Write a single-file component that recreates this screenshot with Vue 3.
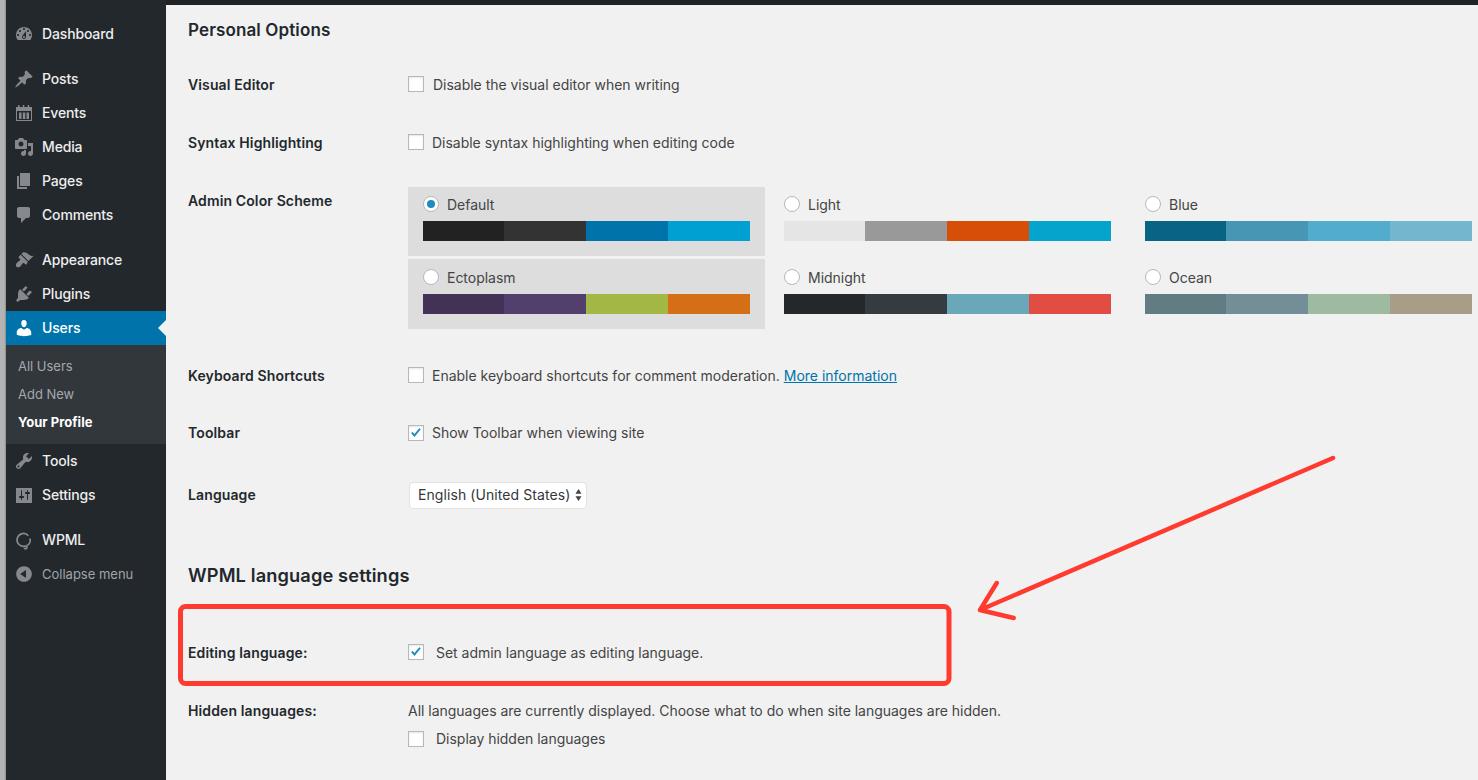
<script setup>
const icons = {
  dashboard: 'M3.76 16h12.48c1.1-1.37 1.76-3.11 1.76-5 0-4.42-3.58-8-8-8s-8 3.58-8 8c0 1.89.66 3.63 1.76 5zM10 4c.55 0 1 .45 1 1s-.45 1-1 1-1-.45-1-1 .45-1 1-1zM6 6c.55 0 1 .45 1 1s-.45 1-1 1-1-.45-1-1 .45-1 1-1zm8 0c.55 0 1 .45 1 1s-.45 1-1 1-1-.45-1-1 .45-1 1-1zm-5.37 5.55L12 7v6c0 1.1-.9 2-2 2s-2-.9-2-2c0-.57.24-1.08.63-1.45zM4 10c.55 0 1 .45 1 1s-.45 1-1 1-1-.45-1-1 .45-1 1-1zm12 0c.55 0 1 .45 1 1s-.45 1-1 1-1-.45-1-1 .45-1 1-1zm-5 3c0-.55-.45-1-1-1s-1 .45-1 1 .45 1 1 1 1-.45 1-1z',
  post: 'M10.44 3.02l1.82-1.82 6.36 6.35-1.83 1.82c-1.05-.68-2.48-.57-3.41.36l-.75.75c-.92.93-1.04 2.35-.35 3.41l-1.83 1.82-2.41-2.41-2.8 2.79c-.42.42-3.38 2.71-3.8 2.29s1.86-3.39 2.28-3.81l2.79-2.79L4.1 9.36l1.83-1.82c1.05.69 2.48.57 3.4-.36l.75-.75c.93-.92 1.05-2.35.36-3.41z',
  events: 'M2 4h2V2h1.5v2h3.3V2h1.5v2h3.4V2h1.5v2H18v14H2V4zm1 4v9h14V8H3zm2 1.5h2.5V16H5V9.500zm3.800 0h2.500V16H8.800V9.500zm3.700 0H15V16h-2.500V9.500z',
  media: 'M13 11V4c0-.55-.45-1-1-1h-1.67L9 1H5L3.67 3H2c-.55 0-1 .45-1 1v7c0 .55.45 1 1 1h10c.55 0 1-.45 1-1zM7 4.500c1.380 0 2.500 1.120 2.500 2.500S8.380 9.500 7 9.500 4.500 8.380 4.500 7 5.620 4.500 7 4.500zM14 6h5v10.500c0 1.380-1.120 2.500-2.500 2.500S14 17.880 14 16.500s1.120-2.500 2.500-2.500c.17 0 .34.02.5.05V9h-3V6zm-4 8.050V13h2v3.500c0 1.380-1.120 2.500-2.500 2.500S7 17.880 7 16.500 8.120 14 9.500 14c.17 0 .34.02.5.05z',
  page: 'M6 15V2h10v13H6zm-1 1h8v2H3V5h2v11z',
  comments: 'M5 2h9c1.100 0 2 .9 2 2v7c0 1.100-.9 2-2 2h-2l-5 5v-5H5c-1.100 0-2-.9-2-2V4c0-1.100.9-2 2-2z',
  appearance: 'M14.480 11.060L7.410 3.990l1.500-1.500c.5-.56 2.300-.47 3.510.32 1.210.8 1.430 1.280 2.910 2.100 1.180.64 2.450 1.260 4.450.85zM13.770 11.770L6.700 4.700 4.930 6.470c-.39.39-.39 1.020 0 1.410l1.060 1.060c.39.39.39 1.030 0 1.420-.6.6-1.430 1.110-2.210 1.690-.35.26-.7.53-1.010.84-1.180 1.180-1.140 2.900-.3 3.800.9.9 2.620.88 3.800-.3.31-.31.58-.66.84-1.010.58-.78 1.090-1.610 1.690-2.210.39-.39 1.030-.39 1.420 0l1.060 1.060c.39.39 1.020.39 1.410 0z',
  plugins: 'M13.110 4.360L9.870 7.600 8 5.730l3.240-3.240c.35-.34 1.050-.2 1.560.32.52.51.66 1.210.31 1.550zm-8 1.770l.91-1.120 9.010 9.010-1.190.84c-.71.71-2.630 1.160-3.820 1.160H6.140L4.900 17.260c-.59.59-1.540.59-2.120 0-.59-.58-.59-1.530 0-2.120l1.240-1.240v-3.880c0-1.130.4-3.190 1.090-3.890zm7.260 3.970l3.240-3.240c.34-.35 1.040-.21 1.550.31.52.51.66 1.210.31 1.550l-3.240 3.250z',
  users: 'M10 9.250c-2.270 0-2.730-3.440-2.730-3.440C7 4.020 7.820 2 9.970 2c2.160 0 2.980 2.020 2.710 3.810 0 0-.41 3.440-2.680 3.440zm0 2.570L12.720 10c2.390 0 4.520 2.330 4.520 4.530v2.490s-3.650 1.130-7.240 1.130c-3.650 0-7.240-1.130-7.240-1.130v-2.490c0-2.250 1.940-4.480 4.470-4.480z',
  tools: 'M16.680 9.770c-1.340 1.340-3.300 1.670-4.950.99l-5.410 6.520c-.99.99-2.590.99-3.580 0s-.99-2.590 0-3.570l6.520-5.420c-.68-1.650-.35-3.610.99-4.950 1.280-1.280 3.120-1.620 4.720-1.060l-2.890 2.890 2.820 2.820 2.860-2.870c.53 1.580.18 3.390-1.080 4.650zM3.810 16.210c.4.39 1.040.39 1.430 0 .4-.4.4-1.040 0-1.430-.39-.4-1.030-.4-1.430 0-.39.39-.39 1.030 0 1.430z',
  settings: 'M18 18V3H2v15h16zM8 11h1c.55 0 1 .45 1 1s-.45 1-1 1H8v1.500c0 .28-.22.5-.5.5s-.5-.22-.5-.5V13H6c-.55 0-1-.45-1-1s.45-1 1-1h1V5.500c0-.28.22-.5.5-.5s.5.22.5.5V11zm5-2h-1c-.55 0-1-.45-1-1s.45-1 1-1h1V5.500c0-.28.22-.5.5-.5s.5.22.5.5V7h1c.55 0 1 .45 1 1s-.45 1-1 1h-1v5.500c0 .28-.22.5-.5.5s-.5-.22-.5-.5V9z',
  wpml: 'M14.300 5.700A6.400 6.400 0 1 0 10.500 16.200c1.500 0 2.400.5 2.400 1.400 0 .7-.6 1.200-1.300 1.200-.7 0-1.200-.4-1.300-1M15.900 8.500A6 6 0 0 1 12.500 15.800',
  collapse: 'M10 2.160c4.330 0 7.840 3.510 7.840 7.840s-3.510 7.840-7.840 7.840S2.160 14.330 2.160 10 5.710 2.160 10 2.160zm2 11.720V6.120L6.180 9.970z'
}

const menu = [
  { label: 'Dashboard', icon: 'dashboard', sep: true },
  { label: 'Posts', icon: 'post' },
  { label: 'Events', icon: 'events' },
  { label: 'Media', icon: 'media' },
  { label: 'Pages', icon: 'page' },
  { label: 'Comments', icon: 'comments', sep: true },
  { label: 'Appearance', icon: 'appearance' },
  { label: 'Plugins', icon: 'plugins' },
  { label: 'Users', icon: 'users', active: true },
  { label: 'Tools', icon: 'tools' },
  { label: 'Settings', icon: 'settings', sep: true },
  { label: 'WPML', icon: 'wpml', outline: true },
  { label: 'Collapse menu', icon: 'collapse', muted: true }
]

const schemes = [
  { name: 'Default', on: true, gray: true, c: ['#222222', '#333333', '#0073aa', '#00a0d2'] },
  { name: 'Light', c: ['#e5e5e5', '#999999', '#d64e07', '#04a4cc'] },
  { name: 'Blue', c: ['#096484', '#4796b3', '#52accc', '#74b6ce'] },
  { name: 'Ectoplasm', gray: true, low: true, c: ['#413256', '#523f6d', '#a3b745', '#d46f15'] },
  { name: 'Midnight', low: true, c: ['#25282b', '#363b3f', '#69a8bb', '#e14d43'] },
  { name: 'Ocean', low: true, c: ['#627c83', '#738e96', '#9ebaa0', '#aa9d88'] }
]
</script>

<template>
  <div class="page">
    <div class="edge"></div>
    <nav class="side">
      <template v-for="m in menu" :key="m.label">
        <div class="item" :class="{ active: m.active, sep: m.sep, muted: m.muted }">
          <svg class="ico" :class="{ outline: m.outline }" viewBox="0 0 20 20"><path :d="icons[m.icon]" /></svg>
          <span>{{ m.label }}</span>
        </div>
        <div v-if="m.active" class="sub">
          <div class="subitem">All Users</div>
          <div class="subitem">Add New</div>
          <div class="subitem current">Your Profile</div>
        </div>
      </template>
    </nav>
    <main class="main">
      <h2 class="h h1st">Personal Options</h2>
      <div class="row r58">
        <div class="label">Visual Editor</div>
        <label class="check"><span class="box"></span><span class="txt t433">Disable the visual editor when writing</span></label>
      </div>
      <div class="row r58">
        <div class="label">Syntax Highlighting</div>
        <label class="check"><span class="box"></span><span class="txt">Disable syntax highlighting when editing code</span></label>
      </div>
      <div class="row scheme-row">
        <div class="label">Admin Color Scheme</div>
        <div class="schemes">
          <div v-for="s in schemes" :key="s.name" class="scheme" :class="{ gray: s.gray, low: s.low }">
            <div class="sname">
              <span class="radio" :class="{ on: s.on }"></span>
              <span>{{ s.name }}</span>
            </div>
            <div class="strip">
              <span v-for="col in s.c" :key="col" :style="{ background: col }"></span>
            </div>
          </div>
        </div>
      </div>
      <div class="row r58">
        <div class="label">Keyboard Shortcuts</div>
        <label class="check"><span class="box"></span><span class="txt tkeys">Enable keyboard shortcuts for comment moderation. <a class="link">More information</a></span></label>
      </div>
      <div class="row r57">
        <div class="label">Toolbar</div>
        <label class="check"><span class="box"><svg viewBox="0 0 16 16"><path d="M2.500 8.200l1.500-1.500 2.200 2.300L11.700 2.500l1.800 1.200-7.200 8.800z" /></svg></span><span class="txt">Show Toolbar when viewing site</span></label>
      </div>
      <div class="row r66">
        <div class="label">Language</div>
        <div class="select">English (United States)
          <svg class="updown" viewBox="0 0 8 14"><path d="M4 0l3.500 5.500h-7zM4 14L.5 8.500h7z" /></svg>
        </div>
      </div>
      <h2 class="h hwpml">WPML language settings</h2>
      <div class="row r58">
        <div class="label">Editing language:</div>
        <label class="check wide"><span class="box"><svg viewBox="0 0 16 16"><path d="M2.500 8.200l1.500-1.500 2.200 2.300L11.700 2.500l1.800 1.200-7.200 8.800z" /></svg></span><span class="txt">Set admin language as editing language.</span></label>
      </div>
      <div class="row hidden-row">
        <div class="label">Hidden languages:</div>
        <div class="stack">
          <div class="plain">All languages are currently displayed. Choose what to do when site languages are hidden.</div>
          <label class="check wide"><span class="box"></span><span class="txt">Display hidden languages</span></label>
        </div>
      </div>
    </main>
    <svg class="mark" viewBox="0 0 1478 780">
      <rect x="180.500" y="606.500" width="768.500" height="77" rx="5" class="ln5" />
      <path d="M1333 458L980 610M996.700 583L980 610L1013.700 618" class="ln4" />
    </svg>
  </div>
</template>

<style>
html, body { margin: 0; background: #f1f1f1; overflow: hidden; }
</style>

<style scoped>
.page {
  display: flex;
  width: 1478px;
  height: 780px;
  overflow: hidden;
  position: relative;
  font-family: Inter, "Liberation Sans", sans-serif;
  font-size: 14px;
  letter-spacing: -0.02px;
  color: #444;
  background: #f1f1f1;
}
.edge {
  flex: none;
  width: 6px;
  background: linear-gradient(to right, #b4b4b4 70%, #8c8c8c);
}
.side {
  flex: none;
  width: 160px;
  padding-top: 17px;
  background: #23282d;
  color: #eee;
  box-sizing: border-box;
}
.item {
  position: relative;
  display: flex;
  align-items: center;
  gap: 8px;
  height: 34px;
  padding-left: 8px;
  font-weight: 500;
  letter-spacing: -0.15px;
}
.item span { padding-bottom: 2px; }
.item.sep { margin-bottom: 11px; }
.ico { flex: none; width: 20px; height: 20px; fill: #85898d; }
.ico.outline { fill: none; stroke: #85898d; stroke-width: 1.700; }
.item.active { background: #0073aa; color: #fff; }
.item.active .ico { fill: #fff; }
.item.active::after {
  content: "";
  position: absolute;
  right: 0;
  top: 9px;
  border: 8px solid transparent;
  border-right-color: #f1f1f1;
  border-left-width: 0;
}
.item.muted { color: #a0a5aa; font-size: 13px; font-weight: 400; letter-spacing: 0; }
.item.muted span { padding-bottom: 0; }
.sub { background: #32373c; padding: 7px 0 8px; }
.subitem {
  height: 28px;
  line-height: 28px;
  padding-left: 12px;
  font-size: 13px;
  color: #a4a8ac;
}
.subitem.current { color: #fff; font-weight: 700; letter-spacing: 0.05px; }
.main {
  flex: 1;
  min-width: 0;
  padding-left: 22px;
  border-top: 5px solid #1f2326;
}
.h {
  margin: 0;
  font-size: 17px;
  font-weight: 600;
  letter-spacing: 0.12px;
  color: #23282d;
  display: flex;
  align-items: center;
}
.h1st { height: 50px; margin-bottom: 1px; }
.hwpml { height: 96px; padding-bottom: 2px; box-sizing: border-box; font-size: 18.250px; }
.row { display: flex; align-items: center; }
.r58 { height: 58px; }
.r57 { height: 57px; }
.r66 { height: 66px; }
.label {
  flex: none;
  width: 220px;
  padding-bottom: 2px;
  font-weight: 600;
  letter-spacing: 0.12px;
  color: #23282d;
}
.check { display: flex; align-items: center; gap: 8px; }
.check.wide { gap: 12px; }
.txt { padding-bottom: 2px; }
.t433 { margin-left: 1px; }
.tkeys { letter-spacing: 0; }
.box {
  flex: none;
  box-sizing: border-box;
  width: 16px;
  height: 16px;
  margin-top: -2px;
  background: #fff;
  border: 1px solid #b4b9be;
  box-shadow: inset 0 1px 2px rgba(0,0,0,.1);
  display: block;
}
.box svg { display: block; width: 14px; height: 14px; fill: #1e8cbe; }
.link { color: #0073aa; text-decoration: underline; }
.scheme-row { align-items: flex-start; height: 175px; padding-top: 15px; box-sizing: border-box; }
.scheme-row .label { margin-top: 5px; padding-bottom: 0; }
.schemes {
  flex: none;
  display: grid;
  grid-template-columns: 357px 357px 357px;
  grid-template-rows: 69px 70px;
  column-gap: 4px;
  row-gap: 3px;
}
.scheme { box-sizing: border-box; padding: 8px 15px 0; }
.scheme.low { padding-top: 9px; }
.scheme.gray { background: #ddd; }
.sname { display: flex; align-items: center; gap: 8px; height: 18px; }
.radio {
  flex: none;
  box-sizing: border-box;
  width: 16px;
  height: 16px;
  border-radius: 50%;
  background: #fff;
  border: 1px solid #b4b9be;
  position: relative;
}
.radio.on::after {
  content: "";
  position: absolute;
  left: 3px;
  top: 3px;
  width: 8px;
  height: 8px;
  border-radius: 50%;
  background: #1e8cbe;
}
.strip {
  display: grid;
  grid-template-columns: 81px 82px 82px 82px;
  height: 20px;
  margin-top: 8px;
}
.select {
  box-sizing: border-box;
  display: flex;
  align-items: center;
  justify-content: space-between;
  width: 178px;
  height: 27px;
  margin-left: 1px;
  padding: 0 4px 2px 8px;
  background: #fff;
  border: 1px solid #e2e2e2;
  border-radius: 4px;
  color: #32373c;
  letter-spacing: 0.08px;
  white-space: nowrap;
}
.updown { flex: none; width: 7px; height: 12px; fill: #444; margin-top: 2px; }
.hidden-row { align-items: flex-start; padding-top: 20px; }
.hidden-row .label { line-height: 18px; padding-bottom: 0; }
.stack { display: flex; flex-direction: column; gap: 10px; }
.plain { line-height: 18px; }
.mark {
  position: absolute;
  left: 0;
  top: 0;
  width: 1478px;
  height: 780px;
  pointer-events: none;
}
.ln5 { fill: none; stroke: #ff3b30; stroke-width: 5; }
.ln4 { fill: none; stroke: #ff3b30; stroke-width: 4.500; stroke-linecap: round; stroke-linejoin: round; }
</style>
